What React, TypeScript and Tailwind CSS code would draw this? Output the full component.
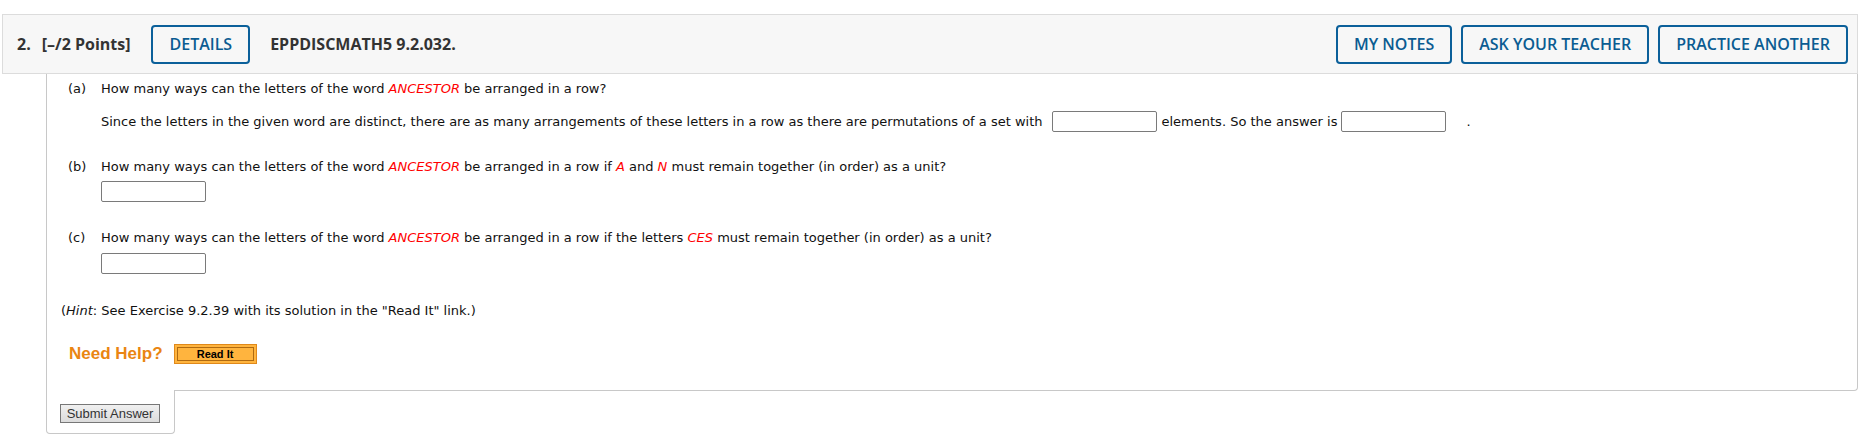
import React from 'react';

const body = { fontFamily: '"DejaVu Sans", Verdana, sans-serif' };
const head = { fontFamily: '"Open Sans", "Noto Sans", sans-serif' };
const arial = { fontFamily: '"Liberation Sans", Arial, sans-serif' };

function Word({ children }: { children: React.ReactNode }) {
  return <span className="italic text-[#ff0000]">{children}</span>;
}

function Blank({ className = '' }: { className?: string }) {
  return (
    <input
      type="text"
      className={`h-[21px] w-[105px] rounded-[2px] border border-[#7a7a7a] bg-white px-1 ${className}`}
    />
  );
}

function HeaderButton({ label }: { label: string }) {
  return (
    <button className="h-[39px] rounded-[4px] border-2 border-[#0b609a] bg-transparent px-[16px] text-[16px] font-semibold text-[#0b5c92]">
      {label}
    </button>
  );
}

function Part({ label, children }: { label: string; children: React.ReactNode }) {
  return (
    <div className="flex leading-[20px]">
      <span className="w-[33px] shrink-0">({label})</span>
      <div>{children}</div>
    </div>
  );
}

export default function App() {
  return (
    <div className="min-h-[441px] bg-white pl-[2px] pt-[14px] text-[#222]">
      <div
        style={head}
        className="flex h-[60px] w-[1856px] items-center border border-[#dcdcdc] bg-[#f7f7f7] pl-[14px] pr-[9px] text-[16px] font-bold text-[#333]"
      >
        <span>2.</span>
        <span className="ml-[11px]">[–/2 Points]</span>
        <div className="ml-[21px]">
          <HeaderButton label="DETAILS" />
        </div>
        <span className="ml-[20px]">EPPDISCMATH5 9.2.032.</span>
        <div className="ml-auto flex gap-[9px]">
          <HeaderButton label="MY NOTES" />
          <HeaderButton label="ASK YOUR TEACHER" />
          <HeaderButton label="PRACTICE ANOTHER" />
        </div>
      </div>

      <div className="ml-[44px] w-[1812px]">
        <div
          style={body}
          className="rounded-br-[4px] border-x border-b border-[#c8c8c8] pb-[26px] pl-[14px] pt-[5px] text-[13px] text-[#111]"
        >
          <div className="pl-[7px]">
            <Part label="a">
              <div>
                How many ways can the letters of the word <Word>ANCESTOR</Word> be arranged in a row?
              </div>
              <div className="mt-[12px] flex h-[21px] items-center">
                <span>
                  Since the letters in the given word are distinct, there are as many arrangements of these letters in a
                  row as there are permutations of a set with
                </span>
                <Blank className="ml-[9px]" />
                <span className="ml-[5px]">elements. So the answer is</span>
                <Blank className="ml-[4px]" />
                <span className="ml-[20px]">.</span>
              </div>
            </Part>

            <div className="mt-[25px]">
              <Part label="b">
                <div>
                  How many ways can the letters of the word <Word>ANCESTOR</Word> be arranged in a row if{' '}
                  <Word>A</Word> and <Word>N</Word> must remain together (in order) as a unit?
                </div>
                <Blank className="mt-[4px] block" />
              </Part>
            </div>

            <div className="mt-[26px]">
              <Part label="c">
                <div>
                  How many ways can the letters of the word <Word>ANCESTOR</Word> be arranged in a row if the letters{' '}
                  <Word>CES</Word> must remain together (in order) as a unit?
                </div>
                <Blank className="mt-[5px] block" />
              </Part>
            </div>
          </div>

          <div className="mt-[27px] leading-[20px]">
            (<span className="italic">Hint</span>: See Exercise 9.2.39 with its solution in the "Read It" link.)
          </div>

          <div style={arial} className="mt-[23px] flex h-[20px] items-center pl-[8px]">
            <span className="text-[17px] font-bold text-[#ea8512]">Need Help?</span>
            <button className="ml-[11px] flex h-[20px] w-[83px] items-center justify-center border border-[#e0891a] bg-[#ffb43e] p-[2px]">
              <span className="flex h-full w-full items-center justify-center border border-[#b06a10] text-[11px] font-bold text-black">
                Read It
              </span>
            </button>
          </div>
        </div>

        <div className="-mt-px w-[129px] rounded-b-[4px] border-x border-b border-[#c8c8c8] bg-white pb-[9px] pl-[13px] pt-[10px]">
          <button
            style={arial}
            className="h-[19px] w-[100px] border border-[#777] bg-gradient-to-b from-[#f0f0f0] to-[#dcdcdc] text-[13px] leading-[17px] text-[#333]"
          >
            Submit Answer
          </button>
        </div>
      </div>
    </div>
  );
}
